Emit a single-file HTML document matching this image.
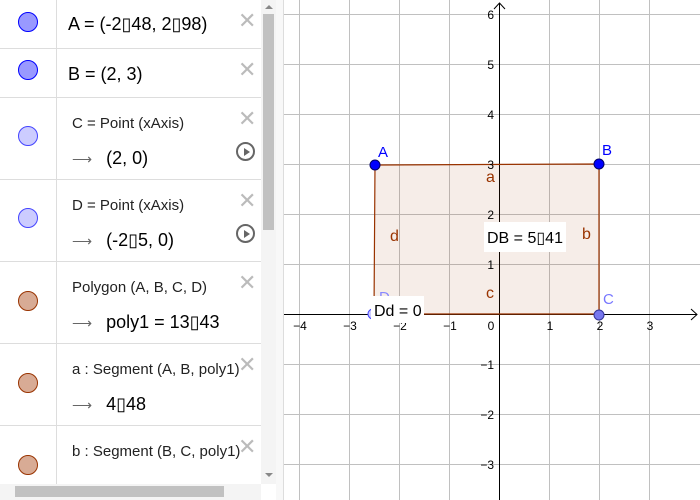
<!DOCTYPE html>
<html><head><style>
body{margin:0;width:700px;height:500px;overflow:hidden;background:#fff;font-family:"Liberation Sans",sans-serif;position:relative}
.p{position:absolute;left:0;top:0;width:261px;height:484px;overflow:hidden}
.row{position:absolute;left:0;width:261px;border-bottom:1px solid #ddd}
.row .c{position:absolute;left:18px;width:20px;height:20px;border-radius:50%;box-sizing:border-box}
.vl{position:absolute;left:56px;top:0;width:1px;height:484px;background:#ddd}
.t{position:absolute;left:68px;font-size:18px;color:#000;white-space:nowrap}
.s{position:absolute;left:72px;font-size:15px;color:#222;white-space:nowrap}
.x{position:absolute;left:238px;font-size:22px;color:#bbb;line-height:1}
.ar{color:#666;font-size:14px;margin-right:14px}
.pl{position:absolute;left:236px;width:19px;height:19px;border:2px solid #666;border-radius:50%;box-sizing:border-box}
.pl:after{content:"";position:absolute;left:6px;top:4px;border-left:6px solid #666;border-top:4px solid transparent;border-bottom:4px solid transparent}
.blue{background:#9999ff;border:1px solid #0000ff}
.lb{background:#ccccff;border:1px solid #4444ff}
.br{background:#d8ab95;border:1px solid #993300}
</style></head><body>
<div class="p">
<div class="vl"></div>
<div class="row" style="top:0;height:48px"><div class="c blue" style="top:12px"></div><div class="t" style="top:14px">A = (-2▯48, 2▯98)</div><div class="x" style="top:10px">✕</div></div>
<div class="row" style="top:49px;height:48px"><div class="c blue" style="top:11px"></div><div class="t" style="top:15px">B = (2, 3)</div><div class="x" style="top:10px">✕</div></div>
<div class="row" style="top:98px;height:81px"><div class="c lb" style="top:28px"></div><div class="s" style="top:17px">C = Point (xAxis)</div><div class="t" style="top:50px;left:72px"><span class="ar">⟶</span>(2, 0)</div><div class="x" style="top:10px">✕</div><div class="pl" style="top:44px"></div></div>
<div class="row" style="top:180px;height:81px"><div class="c lb" style="top:28px"></div><div class="s" style="top:17px">D = Point (xAxis)</div><div class="t" style="top:50px;left:72px"><span class="ar">⟶</span>(-2▯5, 0)</div><div class="x" style="top:10px">✕</div><div class="pl" style="top:44px"></div></div>
<div class="row" style="top:262px;height:81px"><div class="c br" style="top:29px"></div><div class="s" style="top:17px">Polygon (A, B, C, D)</div><div class="t" style="top:50px;left:72px"><span class="ar">⟶</span>poly1 = 13▯43</div><div class="x" style="top:10px">✕</div></div>
<div class="row" style="top:344px;height:81px"><div class="c br" style="top:29px"></div><div class="s" style="top:17px">a : Segment (A, B, poly1)</div><div class="t" style="top:50px;left:72px"><span class="ar">⟶</span>4▯48</div><div class="x" style="top:10px">✕</div></div>
<div class="row" style="top:426px;height:81px"><div class="c br" style="top:29px"></div><div class="s" style="top:17px">b : Segment (B, C, poly1)</div><div class="x" style="top:10px">✕</div></div>
</div>
<div style="position:absolute;left:261px;top:0;width:15px;height:484px;background:#f4f4f4"></div>
<div style="position:absolute;left:263px;top:14px;width:11px;height:216px;background:#c1c1c1"></div>
<div style="position:absolute;left:265px;top:5px;border-bottom:4px solid #888;border-left:4px solid transparent;border-right:4px solid transparent"></div>
<div style="position:absolute;left:265px;top:473px;border-top:4px solid #888;border-left:4px solid transparent;border-right:4px solid transparent"></div>
<div style="position:absolute;left:0;top:484px;width:261px;height:16px;background:#f4f4f4"></div>
<div style="position:absolute;left:15px;top:486px;width:209px;height:11px;background:#c1c1c1"></div>
<div style="position:absolute;left:276px;top:0;width:7px;height:500px;background:#f8f8f8;border-right:1px solid #ddd"></div>
<svg style="position:absolute;left:0;top:0" width="700" height="500">
<g stroke="#c0c0c0" stroke-width="1">
<line x1="299.5" y1="0" x2="299.5" y2="500"/><line x1="349.5" y1="0" x2="349.5" y2="500"/><line x1="399.5" y1="0" x2="399.5" y2="500"/><line x1="449.5" y1="0" x2="449.5" y2="500"/><line x1="549.5" y1="0" x2="549.5" y2="500"/><line x1="599.5" y1="0" x2="599.5" y2="500"/><line x1="649.5" y1="0" x2="649.5" y2="500"/>
<line x1="284" y1="14.5" x2="700" y2="14.5"/><line x1="284" y1="64.5" x2="700" y2="64.5"/><line x1="284" y1="114.5" x2="700" y2="114.5"/><line x1="284" y1="164.5" x2="700" y2="164.5"/><line x1="284" y1="214.5" x2="700" y2="214.5"/><line x1="284" y1="264.5" x2="700" y2="264.5"/><line x1="284" y1="364.5" x2="700" y2="364.5"/><line x1="284" y1="414.5" x2="700" y2="414.5"/><line x1="284" y1="464.5" x2="700" y2="464.5"/>
</g>
<g stroke="#000" stroke-width="1" fill="none">
<line x1="499.5" y1="3" x2="499.5" y2="500"/><line x1="284" y1="314.5" x2="697" y2="314.5"/>
<path d="M494 9 L499.5 3 L505 9"/><path d="M691 309 L697 314.5 L691 320"/>
</g>
<polygon points="375,165 599,164 599,314 374,314" fill="rgba(153,51,0,0.09)" stroke="#993300" stroke-width="1.2"/>
<g font-size="12" fill="#000" text-anchor="middle" font-family="Liberation Sans">
<text x="300" y="330">−4</text><text x="350" y="330">−3</text><text x="400" y="330">−2</text><text x="450" y="330">−1</text><text x="491" y="330">0</text><text x="550" y="330">1</text><text x="600" y="330">2</text><text x="650" y="330">3</text>
</g>
<g font-size="12" fill="#000" text-anchor="end" font-family="Liberation Sans">
<text x="494" y="19">6</text><text x="494" y="69">5</text><text x="494" y="119">4</text><text x="494" y="169">3</text><text x="494" y="219">2</text><text x="494" y="269">1</text><text x="494" y="369">−1</text><text x="494" y="419">−2</text><text x="494" y="469">−3</text>
</g>
<g font-size="16" fill="#993300" font-family="Liberation Sans">
<text x="486" y="182">a</text><text x="390" y="241">d</text><text x="582" y="239">b</text><text x="486" y="298">c</text>
</g>
<rect x="484" y="222" width="82" height="30" fill="#fff"/>
<text x="487" y="243" font-size="16" fill="#000">DB = 5▯41</text>
<text x="379" y="302" font-size="15" fill="#8888ff">D</text>
<circle cx="373" cy="314" r="5" fill="#ccccff" stroke="#4444ff"/>
<rect x="371" y="296" width="53" height="27" fill="#fff"/>
<text x="374" y="316" font-size="16" fill="#000">Dd = 0</text>
<circle cx="375" cy="165" r="5" fill="#0000ff" stroke="#000066"/>
<circle cx="599" cy="164" r="5" fill="#0000ff" stroke="#000066"/>
<circle cx="599" cy="315" r="5" fill="#7777ee" stroke="#333399"/>
<text x="378" y="157" font-size="15" fill="#0000ff">A</text>
<text x="602" y="155" font-size="15" fill="#0000ff">B</text>
<text x="603" y="304" font-size="15" fill="#7777ff">C</text>
</svg>
</body></html>
